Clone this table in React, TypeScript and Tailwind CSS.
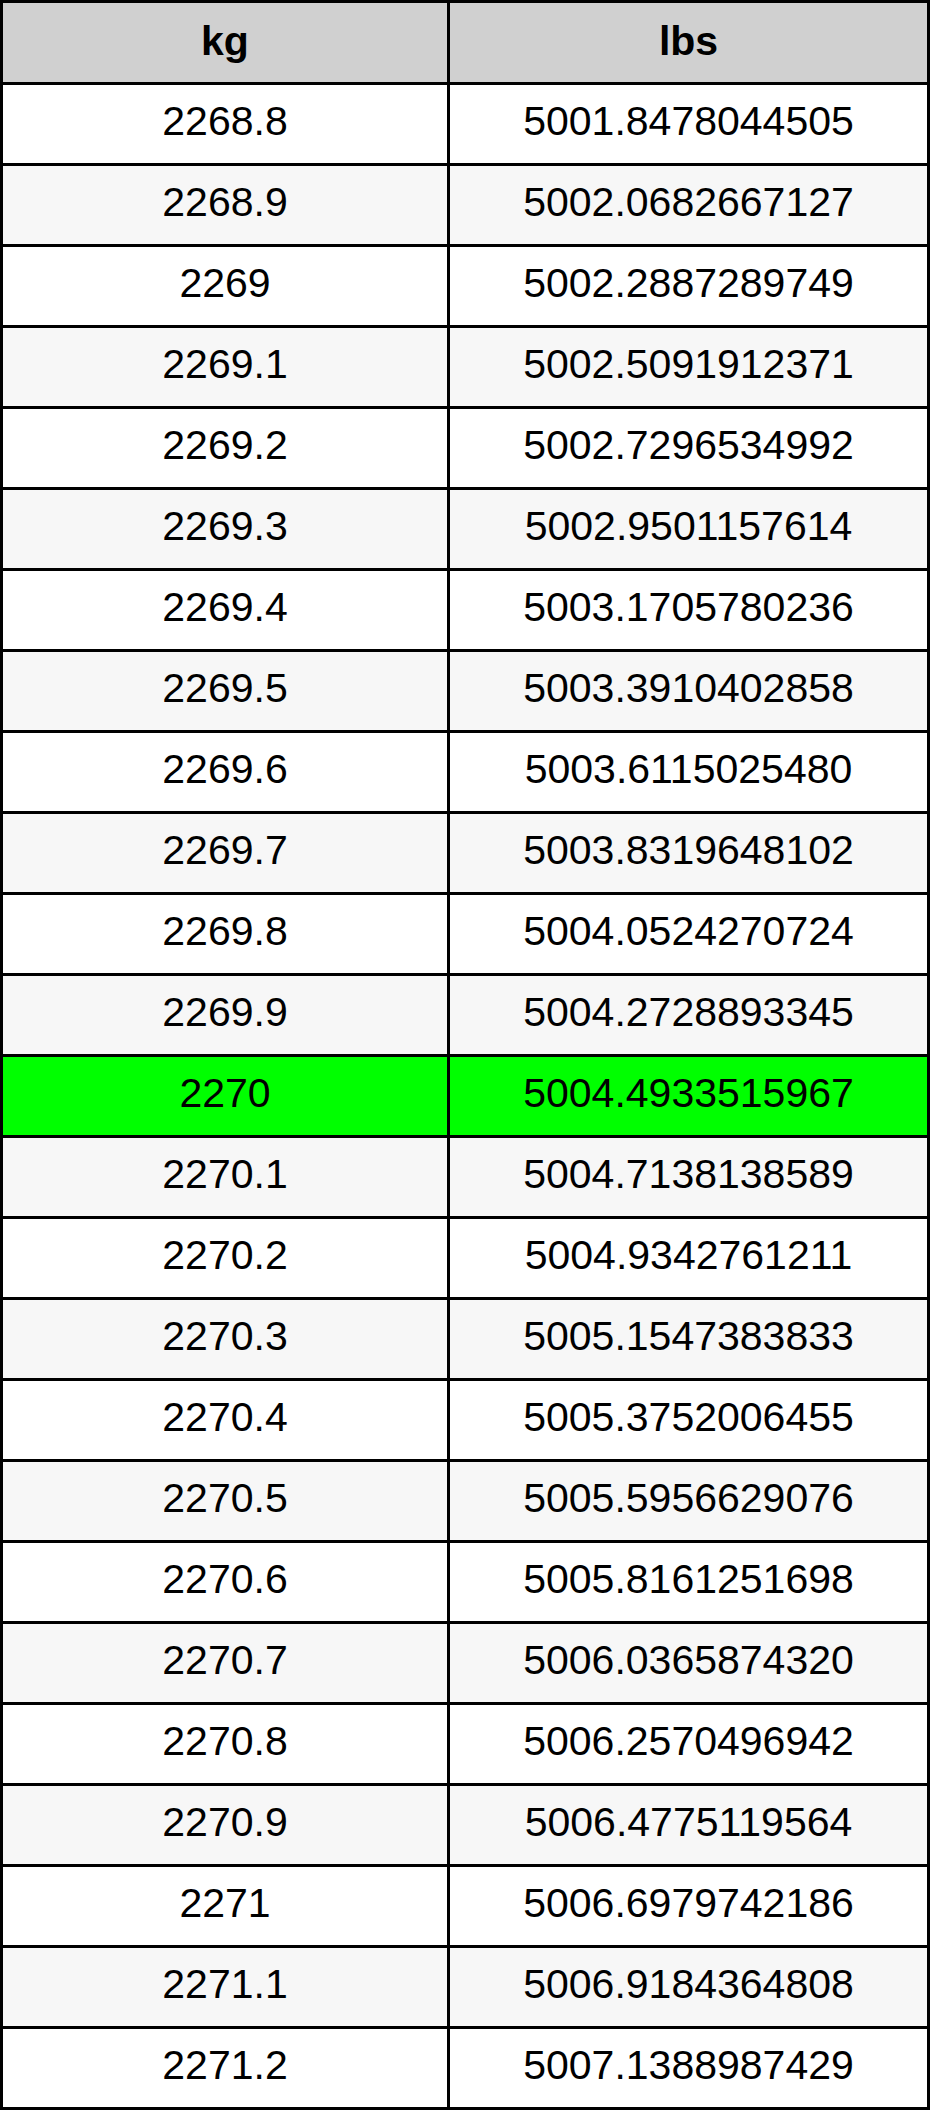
import React from 'react';

const rows: [string, string][] = [
  ['2268.8', '5001.8478044505'],
  ['2268.9', '5002.0682667127'],
  ['2269', '5002.2887289749'],
  ['2269.1', '5002.5091912371'],
  ['2269.2', '5002.7296534992'],
  ['2269.3', '5002.9501157614'],
  ['2269.4', '5003.1705780236'],
  ['2269.5', '5003.3910402858'],
  ['2269.6', '5003.6115025480'],
  ['2269.7', '5003.8319648102'],
  ['2269.8', '5004.0524270724'],
  ['2269.9', '5004.2728893345'],
  ['2270', '5004.4933515967'],
  ['2270.1', '5004.7138138589'],
  ['2270.2', '5004.9342761211'],
  ['2270.3', '5005.1547383833'],
  ['2270.4', '5005.3752006455'],
  ['2270.5', '5005.5956629076'],
  ['2270.6', '5005.8161251698'],
  ['2270.7', '5006.0365874320'],
  ['2270.8', '5006.2570496942'],
  ['2270.9', '5006.4775119564'],
  ['2271', '5006.6979742186'],
  ['2271.1', '5006.9184364808'],
  ['2271.2', '5007.1388987429'],
];

export default function App() {
  return (
    <div className="w-[930px] bg-white font-['Liberation_Sans',Arial,sans-serif] text-black">
      <div className="border-[3px] border-black">
        {/* header */}
        <div className="grid grid-cols-[447px_1fr] h-[79px] bg-[#d0d0d0] text-[41px] font-bold">
          <div className="flex items-center justify-center border-r-[3px] border-black pb-[2px]">kg</div>
          <div className="flex items-center justify-center pb-[2px]">lbs</div>
        </div>

        {rows.map(([kg, lbs], i) => {
          const highlight = kg === '2270';
          const bg = highlight ? 'bg-[#00ff00]' : i % 2 === 1 ? 'bg-[#f7f7f7]' : 'bg-white';
          return (
            <div
              key={kg}
              className={`grid grid-cols-[447px_1fr] h-[81px] border-t-[3px] border-black text-[41px] ${bg}`}
            >
              <div className="flex items-center justify-center border-r-[3px] border-black pb-[4px]">{kg}</div>
              <div className="flex items-center justify-center pb-[4px]">{lbs}</div>
            </div>
          );
        })}
      </div>
    </div>
  );
}
